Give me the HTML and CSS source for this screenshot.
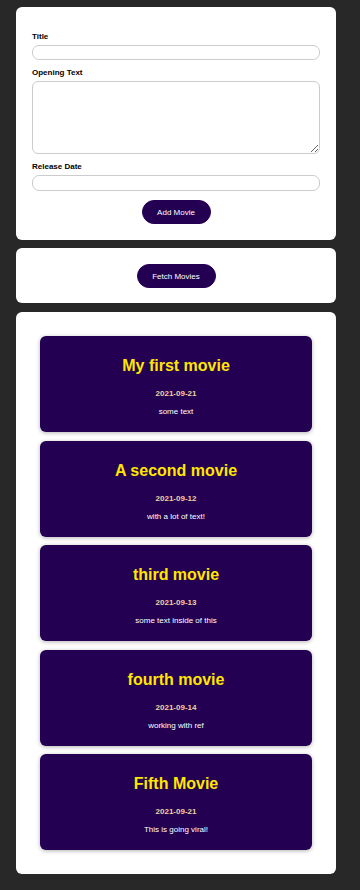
FILE: index.html
```html
<!DOCTYPE html>
<html lang="en">
<head>
<meta charset="utf-8">
<title>Movies</title>
<link rel="stylesheet" href="styles.css">
</head>
<body>
<div class="app">
  <section class="panel form-panel">
    <form class="movie-form">
      <div class="control">
        <label for="title">Title</label>
        <input type="text" id="title">
      </div>
      <div class="control">
        <label for="opening">Opening Text</label>
        <textarea id="opening"></textarea>
      </div>
      <div class="control">
        <label for="date">Release Date</label>
        <input type="text" id="date">
      </div>
      <div class="actions">
        <button type="button" class="btn add-btn">Add Movie</button>
      </div>
    </form>
  </section>
  <section class="panel fetch-panel">
    <button type="button" class="btn fetch-btn">Fetch Movies</button>
  </section>
  <section class="panel list-panel">
    <ul class="movies">
      <li class="movie"><h2>My first movie</h2><h3>2021-09-21</h3><p>some text</p></li>
      <li class="movie"><h2>A second movie</h2><h3>2021-09-12</h3><p>with a lot of text!</p></li>
      <li class="movie"><h2>third movie</h2><h3>2021-09-13</h3><p>some text inside of this</p></li>
      <li class="movie"><h2>fourth movie</h2><h3>2021-09-14</h3><p>working with ref</p></li>
      <li class="movie"><h2>Fifth Movie</h2><h3>2021-09-21</h3><p>This is going viral!</p></li>
    </ul>
  </section>
</div>
</body>
</html>
```

FILE: styles.css
```css
html, body {
  margin: 0;
  padding: 0;
  background: #282828;
}
body {
  font-family: "Liberation Sans", Arial, sans-serif;
  font-size: 8px;
}
.app {
  display: flex;
  flex-direction: column;
  padding: 7px 24px 16px 16px;
}
.panel {
  background: #ffffff;
  border-radius: 6px;
  box-sizing: border-box;
  width: 320px;
}
.form-panel {
  padding: 25px 16px 16px;
}
.movie-form {
  display: flex;
  flex-direction: column;
}
.control {
  display: flex;
  flex-direction: column;
  margin-bottom: 8px;
}
.control label {
  font-weight: bold;
  font-size: 8px;
  line-height: 10px;
  color: #000;
  margin-bottom: 3px;
}
.control input,
.control textarea {
  box-sizing: border-box;
  width: 288px;
  border: 1px solid #cccccc;
  border-radius: 7px;
  font: inherit;
  margin: 0;
  padding: 2px 6px;
  background: #fff;
}
.control input {
  height: 15px;
}
.control textarea {
  height: 73px;
  border-radius: 6px;
  resize: vertical;
}
.control:nth-child(3) {
  margin-bottom: 9px;
}
.control:nth-child(3) input {
  height: 16px;
}
.actions {
  display: flex;
  justify-content: center;
}
.btn {
  font-family: "Liberation Sans", Arial, sans-serif;
  font-size: 8px;
  color: #ffffff;
  background: #230052;
  border: 1px solid #230052;
  border-radius: 12px;
  height: 24px;
  padding: 0 16px;
  margin: 0;
  cursor: pointer;
}
.add-btn {
  width: 69px;
  padding: 0;
}
.fetch-panel {
  margin-top: 8px;
  padding: 16px;
  display: flex;
  justify-content: center;
  height: 55px;
}
.fetch-btn {
  width: 79px;
  padding: 0;
}
.list-panel {
  margin-top: 9px;
  padding: 24px;
}
.movies {
  list-style: none;
  margin: 0;
  padding: 0;
  display: flex;
  flex-direction: column;
  gap: 8.5px;
}
.movie {
  box-sizing: border-box;
  height: 96px;
  background: #230052;
  border-radius: 6px;
  box-shadow: 0 1px 4px rgba(0, 0, 0, 0.3);
  text-align: center;
  padding: 21px 8px 0;
}
.movie h2 {
  margin: 0;
  font-size: 16px;
  line-height: 18px;
  font-weight: bold;
  color: #ffe600;
}
.movie h3 {
  margin: 14px 0 0;
  font-size: 8px;
  line-height: 10px;
  font-weight: bold;
  color: #f3cf9f;
}
.movie p {
  margin: 8px 0 0;
  font-size: 8px;
  line-height: 10px;
  color: #ffffff;
}
```
